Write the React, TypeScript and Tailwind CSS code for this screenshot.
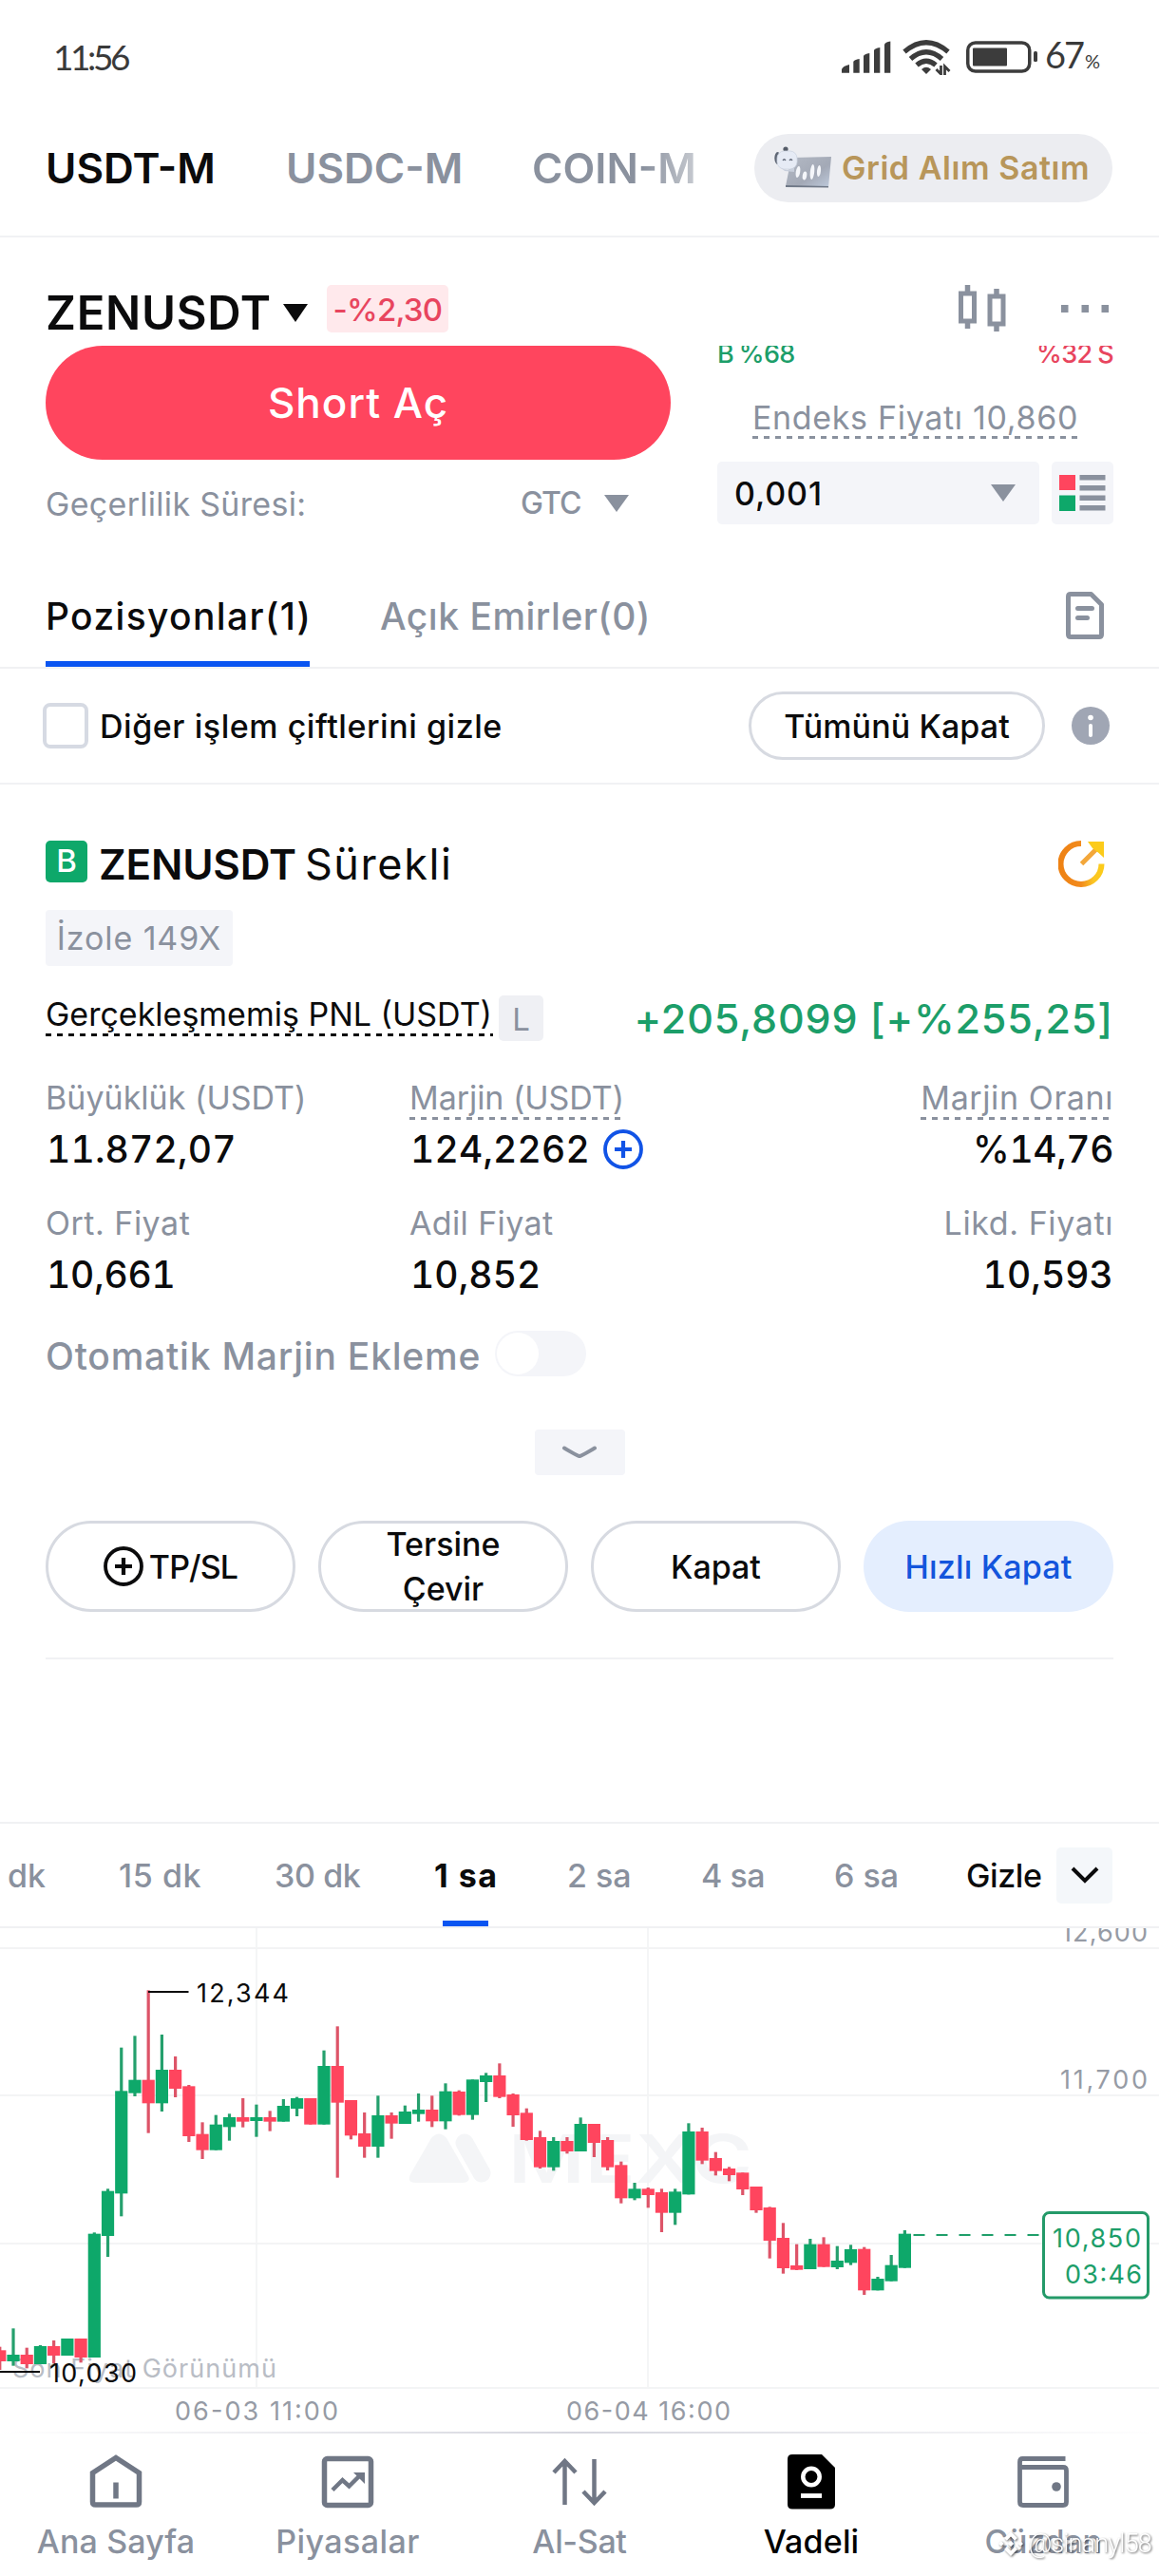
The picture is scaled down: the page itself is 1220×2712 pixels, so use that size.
import type { ReactNode } from "react";
import clsx from "clsx";

const GREEN = "#0ea86a";
const RED = "#ff455e";

// [up, high, bodyTop, bodyBottom, low] in chart units
type Candle = [0 | 1, number, number, number, number];

const CANDLES: Candle[] = [
  [0, 1322, 1333, 1368, 1395],
  [1, 1264, 1347, 1368, 1382],
  [0, 1325, 1347, 1377, 1390],
  [1, 1317, 1320, 1377, 1377],
  [0, 1302, 1320, 1350, 1374],
  [1, 1296, 1296, 1350, 1350],
  [0, 1296, 1296, 1356, 1372],
  [1, 961, 965, 1356, 1356],
  [1, 823, 830, 972, 1038],
  [1, 377, 514, 838, 910],
  [1, 340, 479, 521, 531],
  [0, 196, 479, 553, 647],
  [1, 336, 447, 553, 579],
  [0, 405, 447, 507, 534],
  [0, 495, 499, 657, 675],
  [0, 613, 650, 701, 729],
  [1, 590, 620, 701, 701],
  [1, 586, 597, 628, 671],
  [0, 537, 597, 611, 629],
  [1, 557, 597, 609, 659],
  [0, 577, 597, 611, 641],
  [1, 540, 561, 611, 611],
  [1, 533, 537, 570, 594],
  [0, 537, 537, 620, 620],
  [1, 386, 435, 620, 620],
  [0, 310, 435, 551, 788],
  [0, 543, 543, 655, 667],
  [0, 582, 648, 690, 725],
  [1, 529, 591, 690, 725],
  [0, 582, 591, 617, 665],
  [1, 560, 579, 618, 618],
  [1, 522, 573, 587, 611],
  [0, 529, 573, 610, 628],
  [1, 490, 515, 610, 635],
  [0, 512, 516, 590, 592],
  [1, 478, 478, 590, 605],
  [1, 457, 465, 486, 549],
  [0, 427, 465, 533, 537],
  [0, 522, 525, 591, 627],
  [0, 569, 583, 669, 671],
  [0, 640, 660, 755, 759],
  [1, 660, 672, 755, 766],
  [0, 660, 672, 705, 712],
  [1, 598, 618, 705, 705],
  [0, 618, 618, 678, 723],
  [0, 660, 669, 755, 765],
  [0, 737, 748, 853, 869],
  [1, 804, 823, 853, 859],
  [0, 819, 823, 843, 883],
  [0, 823, 834, 899, 960],
  [1, 823, 832, 899, 937],
  [1, 616, 642, 841, 841],
  [0, 630, 642, 734, 745],
  [0, 707, 726, 767, 781],
  [0, 754, 759, 780, 799],
  [0, 772, 772, 825, 843],
  [0, 816, 816, 891, 899],
  [0, 880, 882, 987, 1043],
  [0, 931, 978, 1074, 1091],
  [0, 998, 1065, 1079, 1080],
  [1, 981, 998, 1077, 1077],
  [0, 976, 998, 1070, 1070],
  [1, 1004, 1050, 1071, 1077],
  [1, 1000, 1014, 1057, 1064],
  [0, 1007, 1013, 1144, 1158],
  [1, 1101, 1107, 1144, 1144],
  [1, 1032, 1064, 1115, 1115],
  [1, 954, 965, 1073, 1073],
];

function StatusBar() {
  return (
    <div className="flex h-[119px] items-center pl-[56px] text-[#3c3c3c]">
      <span className="w-[830px] font-['Lato',sans-serif] text-[37px] leading-[44px] tracking-[-3.4px] text-[#3a3a3a]">
        11:56
      </span>
      <svg width="52" height="34" viewBox="0 0 52 34" fill="currentColor">
        <path d="M0 33.7V30Q1 26.5 8 25V33.7Z" />
        <path d="M12.3 33.7V22Q13 20 18.7 19V33.7Z" />
        <path d="M23 33.7V16Q23.7 14 29.3 13V33.7Z" />
        <path d="M34 33.7V10Q34.7 8 40.3 7V33.7Z" />
        <path d="M45 33.7V4Q45.7 1.5 51.3 .6V33.7Z" />
      </svg>
      <svg
        className="ml-[12px]"
        width="52"
        height="38"
        viewBox="0 0 52 38"
        fill="none"
        stroke="currentColor"
        strokeWidth="5.2"
      >
        <path d="M2 13.5Q25 -6 48 13.5" />
        <path d="M8.5 21Q25 6.5 41.5 21" />
        <path d="M15 27.5Q25 19 35 27.5" />
        <path d="M25 37L20 32Q25 27.5 30 32Z" fill="currentColor" stroke="none" />
        <path d="M40.5 28V37L35.5 32M44.5 38V29L49.5 34" strokeWidth="2.8" />
      </svg>
      <svg
        className="ml-[15px]"
        width="76"
        height="34"
        viewBox="0 0 76 34"
        fill="none"
      >
        <rect
          x="1.75"
          y="2"
          width="65"
          height="30"
          rx="8"
          stroke="currentColor"
          strokeWidth="3.5"
        />
        <rect x="7" y="7.5" width="36" height="19" rx="1" fill="currentColor" />
        <rect x="71" y="11" width="4" height="11" rx="1.5" fill="currentColor" />
      </svg>
      <span className="ml-[7px] mt-[2px] font-['Lato',sans-serif] text-[38px] leading-[44px] tracking-[-2px] text-[#3a3a3a]">
        67
        <span className="ml-[2px] text-[20px] tracking-normal">%</span>
      </span>
    </div>
  );
}

function GridBotIcon() {
  return (
    <svg width="61" height="45" viewBox="0 0 61 45" fill="none">
      <defs>
        <linearGradient id="bot-screen" x1="0" y1="0" x2="1" y2="1">
          <stop offset="0" stopColor="#b4bac5" />
          <stop offset="0.6" stopColor="#a3a9b6" />
          <stop offset="1" stopColor="#bfcbdd" />
        </linearGradient>
      </defs>
      <path d="M18 12L60 11L57 43L12 42Z" fill="url(#bot-screen)" />
      <path d="M12 41L57 42V43.5L12 43Z" fill="#6f7887" />
      <g fill="#f4f6fa">
        <ellipse cx="25" cy="27" rx="2.2" ry="6" transform="rotate(10 25 27)" />
        <ellipse cx="32" cy="31" rx="2.2" ry="4.5" transform="rotate(10 32 31)" />
        <ellipse cx="40" cy="27" rx="2.2" ry="8" transform="rotate(6 40 27)" />
        <ellipse cx="47" cy="26" rx="2" ry="6" transform="rotate(6 47 26)" />
      </g>
      <path d="M12 3V9" stroke="#8d94a3" strokeWidth="1.5" />
      <circle cx="12" cy="3" r="2.6" fill="#555c68" />
      <ellipse cx="3.5" cy="12.5" rx="3.2" ry="6.5" fill="#5f6775" />
      <rect
        x="3"
        y="5"
        width="21"
        height="19"
        rx="7.5"
        fill="#e6ebf5"
        stroke="#cdd4e1"
        strokeWidth="0.8"
      />
      <path d="M6 22Q14 28 21 22V27L11 26Z" fill="#c8cfdc" />
      <path
        d="M9 15Q10.5 12.5 12 15M16 15Q17.5 12.5 19 15"
        stroke="#5f6675"
        strokeWidth="1.3"
      />
    </svg>
  );
}

function MarketTabs() {
  return (
    <div className="flex h-[131px] items-center border-b-2 border-[#f1f2f4] pb-[14px] pl-[48px] text-[44px] font-semibold leading-[54px] text-[#8a919e]">
      <span className="w-[253px] text-[#0b0b0c]">USDT-M</span>
      <span className="w-[259px]">USDC-M</span>
      <span className="w-[234px] [mask-image:linear-gradient(90deg,#000_50%,rgba(0,0,0,0.45)_75%)]">
        COIN-M
      </span>
      <div className="flex h-[72px] w-[377px] items-center rounded-full bg-[#ecedf1] pl-[21px]">
        <GridBotIcon />
        <span className="ml-[10px] whitespace-nowrap text-[34px] leading-[40px] tracking-[0.56px] text-[#b8965a]">
          Grid Alım Satım
        </span>
      </div>
    </div>
  );
}

function PairHeader() {
  return (
    <div className="flex h-[114px] items-center pl-[48px] pt-[36px]">
      <h1 className="mt-[9px] text-[49px] font-semibold leading-[60px] tracking-[0.7px] text-[#0b0b0c]">
        ZENUSDT
      </h1>
      <svg className="ml-[11px] mt-[8px]" width="28" height="19" viewBox="0 0 28 19">
        <path d="M1 0H27L14 19Z" fill="#0b0b0c" />
      </svg>
      <span className="ml-[19px] flex h-[50px] w-[128px] items-center justify-center rounded-[5px] bg-[#ffe9ec] pt-[3px] text-[33px] font-medium tracking-[-0.8px] text-[#e8455e]">
        -%2,30
      </span>
      <svg
        className="ml-[537px]"
        width="50"
        height="50"
        viewBox="0 0 50 50"
        fill="none"
        stroke="#8a919e"
        strokeWidth="5"
      >
        <path d="M9.5 0V8M9.5 39V46M40 4V11M40 42V49" strokeWidth="5.5" />
        <rect x="2.5" y="9" width="14" height="29" />
        <rect x="33" y="12" width="14" height="29" />
      </svg>
      <svg className="ml-[58px]" width="52" height="8" viewBox="0 0 52 8" fill="#8a919e">
        <rect width="7.5" height="8" />
        <rect x="21.5" width="7.5" height="8" />
        <rect x="42.5" width="7.5" height="8" />
      </svg>
    </div>
  );
}

function Dashed({
  children,
  className,
  dark,
}: {
  children: ReactNode;
  className?: string;
  dark?: boolean;
}) {
  return (
    <span
      className={clsx(
        "inline-block whitespace-nowrap bg-[length:100%_3px] bg-bottom bg-no-repeat",
        dark
          ? "bg-[repeating-linear-gradient(90deg,#0b0b0c_0_6px,transparent_6px_12px)]"
          : "bg-[repeating-linear-gradient(90deg,#8a919e_0_6px,transparent_6px_12px)]",
        className,
      )}
    >
      {children}
    </span>
  );
}

function TradePanel() {
  return (
    <div className="flex h-[236px] shrink-0 gap-[49px] overflow-hidden px-[48px]">
      <div className="w-[658px]">
        <button className="flex h-[120px] w-full items-center justify-center rounded-full bg-[#ff455e] text-[44px] font-medium tracking-[1px] text-white">
          Short Aç
        </button>
        <div className="flex h-[92px] items-center text-[34px] text-[#8a919e]">
          <span className="w-[500px] tracking-[0.3px]">Geçerlilik Süresi:</span>
          <span className="w-[88px] text-[32px] font-medium tracking-[-1px]">GTC</span>
          <svg width="26" height="18" viewBox="0 0 26 18">
            <path d="M0 0H26L13 18Z" fill="#8a919e" />
          </svg>
        </div>
      </div>
      <div className="w-[417px]">
        <div className="flex h-[18px] justify-between text-[27px] font-medium leading-[17px] tracking-[-0.6px] [word-spacing:-1px]">
          <span className="text-[#1c9e69]">B %68</span>
          <span className="text-[#e8455e]">%32 S</span>
        </div>
        <div className="mt-[36px] flex justify-center">
          <Dashed className="h-[44px] text-[34px] leading-[44px] tracking-[0.68px] text-[#8a919e]">
            Endeks Fiyatı 10,860
          </Dashed>
        </div>
        <div className="mt-[24px] flex justify-between">
          <div className="flex h-[66px] w-[339px] items-center justify-between rounded-[5px] bg-[#f4f5f9] pl-[18px] pr-[25px] text-[34px] font-medium tracking-[0.9px] text-[#0b0b0c]">
            0,001
            <svg width="26" height="18" viewBox="0 0 26 18">
              <path d="M0 0H26L13 18Z" fill="#8a919e" />
            </svg>
          </div>
          <div className="flex h-[66px] w-[65px] items-center justify-center rounded-[5px] bg-[#f4f5f9]">
            <svg width="49" height="38" viewBox="0 0 49 38" fill="#8a919e">
              <rect width="17" height="16" fill={RED} />
              <rect y="21.5" width="17" height="16.5" fill={GREEN} />
              <rect x="21.5" width="27" height="5.5" />
              <rect x="21.5" y="11" width="27" height="5.5" />
              <rect x="21.5" y="21.5" width="27" height="5.5" />
              <rect x="21.5" y="32" width="27" height="5.5" />
            </svg>
          </div>
        </div>
      </div>
    </div>
  );
}

function OrderTabs() {
  return (
    <div className="flex h-[104px] items-center justify-between border-b-2 border-[#f0f1f3] px-[48px]">
      <div className="flex h-full text-[39px] font-medium">
        <div className="flex h-full w-[278px] items-center whitespace-nowrap border-b-[6px] border-[#0a55f1] pt-[2px] tracking-[1.35px] text-[#0b0b0c]">
          Pozisyonlar(1)
        </div>
        <div className="ml-[74px] flex h-full items-center pb-[4px] tracking-[0.5px] text-[#8a919e]">
          Açık Emirler(0)
        </div>
      </div>
      <svg
        className="mb-[6px] mr-[10px]"
        width="40"
        height="50"
        viewBox="0 0 40 50"
        fill="none"
        stroke="#8a919e"
        strokeWidth="5"
      >
        <path
          d="M2.5 5Q2.5 2.5 5 2.5H26.5L37.5 13.5V45Q37.5 47.5 35 47.5H5Q2.5 47.5 2.5 45Z"
          strokeLinejoin="round"
        />
        <path d="M12.5 17.5H27.5M12.5 27.5H22.5" strokeLinecap="round" />
      </svg>
    </div>
  );
}

function FilterRow() {
  return (
    <div className="flex h-[122px] items-center border-b-2 border-[#f1f2f4] pl-[45px] text-[34px] font-medium text-[#0b0b0c]">
      <span className="h-[48px] w-[48px] rounded-[8px] border-4 border-[#d6dae3]" />
      <span className="ml-[12px] w-[683px] tracking-[0.55px]">
        Diğer işlem çiftlerini gizle
      </span>
      <button className="flex h-[72px] w-[312px] items-center justify-center rounded-full border-3 border-[#d7dae1] tracking-[0.1px]">
        Tümünü Kapat
      </button>
      <svg className="ml-[28px]" width="40" height="40" viewBox="0 0 40 40">
        <circle cx="20" cy="20" r="20" fill="#a0a6b4" />
        <circle cx="20" cy="11.5" r="2.8" fill="#fff" />
        <rect x="18" y="18" width="4" height="14" rx="2" fill="#fff" />
      </svg>
    </div>
  );
}

function CirclePlus({ className }: { className?: string }) {
  return (
    <svg
      className={className}
      width="42"
      height="42"
      viewBox="0 0 42 42"
      fill="none"
      stroke="currentColor"
    >
      <circle cx="21" cy="21" r="19" strokeWidth="3.8" />
      <path d="M21 12V30M12 21H30" strokeWidth="4.2" />
    </svg>
  );
}

function ShareIcon() {
  return (
    <svg width="49" height="49" viewBox="0 0 49 49" fill="none">
      <defs>
        <linearGradient id="share-ring" x1="0" y1="0" x2="1" y2="0">
          <stop offset="0" stopColor="#ee8214" />
          <stop offset="0.5" stopColor="#f28a1c" />
          <stop offset="0.8" stopColor="#fbc524" />
          <stop offset="1" stopColor="#fccb1a" />
        </linearGradient>
      </defs>
      <path
        d="M24 3A21.5 21.5 0 1 0 45.5 24.5"
        stroke="url(#share-ring)"
        strokeWidth="6"
      />
      <path d="M24.5 24.5L40 9" stroke="#f3a73a" strokeWidth="5" />
      <path d="M31 1H48V18L42.5 13L36 8Z" fill="#fccb1a" />
    </svg>
  );
}

function Stat({
  label,
  value,
  tracking,
  valueTracking,
  dashed,
  plus,
  right,
}: {
  label: string;
  value: string;
  tracking: string;
  valueTracking: string;
  dashed?: boolean;
  plus?: boolean;
  right?: boolean;
}) {
  const labelClass = clsx(
    "h-[46px] text-[34px] leading-[46px] text-[#8a919e]",
    tracking,
  );
  return (
    <div className={clsx("flex flex-col gap-[9px]", right ? "items-end" : "items-start")}>
      {dashed ? (
        <Dashed className={labelClass}>{label}</Dashed>
      ) : (
        <span className={labelClass}>{label}</span>
      )}
      <span className="flex h-[44px] items-center pl-[1px] text-[39px] font-medium tabular-nums leading-[44px] text-[#0b0b0c]">
        <span className={valueTracking}>{value}</span>
        {plus && <CirclePlus className="ml-[14px] text-[#1153e6]" />}
      </span>
    </div>
  );
}

function PositionCard() {
  return (
    <div className="flex flex-col px-[48px] pt-[59px]">
      <div className="flex h-[49px] items-start">
        <span className="flex h-[44px] w-[44px] items-center justify-center rounded-[5px] bg-[#0ea86a] text-[33px] font-medium text-white">
          B
        </span>
        <span className="ml-[12px] text-[44px] font-semibold leading-[50px] tracking-[-0.19px] text-[#0b0b0c]">
          ZENUSDT
        </span>
        <span className="ml-[9px] grow text-[45px] leading-[50px] tracking-[1.6px] text-[#0b0b0c]">
          Sürekli
        </span>
        <span className="mr-[9px]">
          <ShareIcon />
        </span>
      </div>

      <span className="mt-[24px] flex h-[59px] w-[197px] items-center justify-center self-start rounded-[4px] bg-[#f4f5f9] text-[34px] tracking-[0.9px] text-[#8a919e]">
        İzole 149X
      </span>

      <div className="mt-[31px] flex h-[48px] items-start">
        <Dashed
          dark
          className="h-[43px] w-[471px] text-[34px] leading-[40px] text-[#0b0b0c]"
        >
          Gerçekleşmemiş PNL (USDT)
        </Dashed>
        <span className="ml-[6px] flex h-[48px] w-[47px] items-center justify-center rounded-[5px] bg-[#eff0f4] pt-[3px] text-[33px] text-[#8a919e]">
          L
        </span>
        <span className="grow whitespace-nowrap text-right text-[43px] font-medium leading-[48px] tracking-[0.85px] text-[#1c9e69]">
          +205,8099 [+%255,25]
        </span>
      </div>

      <div className="mt-[37px] grid grid-cols-[383px_380px_1fr] gap-y-[33px]">
        <Stat
          label="Büyüklük (USDT)"
          value="11.872,07"
          tracking="tracking-[0.02px]"
          valueTracking="tracking-[0.2px]"
        />
        <Stat
          label="Marjin (USDT)"
          value="124,2262"
          tracking="tracking-[-0.05px]"
          valueTracking="tracking-[0.2px]"
          dashed
          plus
        />
        <Stat
          label="Marjin Oranı"
          value="%14,76"
          tracking="tracking-[0.6px]"
          valueTracking="tracking-[-0.4px]"
          dashed
          right
        />
        <Stat
          label="Ort. Fiyat"
          value="10,661"
          tracking="tracking-[0.5px]"
          valueTracking="tracking-[-0.2px]"
        />
        <Stat
          label="Adil Fiyat"
          value="10,852"
          tracking="tracking-[0.37px]"
          valueTracking="tracking-[0.1px]"
        />
        <Stat
          label="Likd. Fiyatı"
          value="10,593"
          tracking="tracking-[0.6px]"
          valueTracking="tracking-[0.1px]"
          right
        />
      </div>

      <div className="mt-[37px] flex h-[48px] items-start">
        <span className="text-[39px] font-medium leading-[54px] tracking-[0.78px] text-[#8a919e]">
          Otomatik Marjin Ekleme
        </span>
        <span className="ml-[15px] flex h-[48px] w-[96px] items-center rounded-full bg-[#f4f5f9] pl-[2px]">
          <span className="h-[44px] w-[44px] rounded-full bg-white" />
        </span>
      </div>

      <button className="mt-[56px] flex h-[48px] w-[95px] items-center justify-center self-center rounded-[4px] bg-[#f4f5f9]">
        <svg width="38" height="14" viewBox="0 0 38 14" fill="none">
          <path
            d="M3 2.5Q17 11 19 11T35 2.5"
            stroke="#8a919e"
            strokeWidth="4"
            strokeLinecap="round"
          />
        </svg>
      </button>

      <div className="mt-[48px] grid h-[96px] grid-cols-4 gap-[24px] text-[34px] font-medium leading-[47px] text-[#0b0b0c]">
        <button className="flex items-center justify-center rounded-full border-3 border-[#d7dae1]">
          <CirclePlus className="mr-[6px]" />
          <span className="tracking-[-0.9px]">TP/SL</span>
        </button>
        <button className="flex h-[96px] items-center justify-center rounded-full border-3 border-[#d7dae1] px-[48px]">
          Tersine Çevir
        </button>
        <button className="flex items-center justify-center rounded-full border-3 border-[#d7dae1]">
          Kapat
        </button>
        <button className="flex items-center justify-center rounded-full bg-[#e4eefe] tracking-[0.2px] text-[#1355dc]">
          Hızlı Kapat
        </button>
      </div>

      <div className="mb-[171px] mt-[48px] h-[2px] bg-[#f1f2f4]" />
    </div>
  );
}

function IntervalBar() {
  return (
    <div className="grid h-[112px] grid-cols-[8px_117px_164px_168px_140px_141px_140px_139px_95px_59px] items-center border-y-2 border-[#f0f1f3] text-[34px] font-medium text-[#8a919e]">
      <span />
      <span>dk</span>
      <span className="tracking-[0.6px]">15 dk</span>
      <span className="tracking-[-0.4px]">30 dk</span>
      <div className="relative flex h-full items-center font-bold tracking-[1.5px] text-[#0b0b0c]">
        1 sa
        <span className="absolute bottom-0 left-[9px] h-[6px] w-[48px] bg-[#0a55f1]" />
      </div>
      <span>2 sa</span>
      <span className="tracking-[-0.5px]">4 sa</span>
      <span>6 sa</span>
      <span className="tracking-[-0.4px] text-[#0b0b0c]">Gizle</span>
      <span className="flex h-[59px] items-center justify-center rounded-[5px] bg-[#f4f7fa]">
        <svg width="30" height="18" viewBox="0 0 30 18" fill="none">
          <path d="M2 2L15 15L28 2" stroke="#0b0b0c" strokeWidth="4" />
        </svg>
      </span>
    </div>
  );
}

function PriceChart() {
  return (
    <svg
      className="block font-['Inter',sans-serif]"
      width="1220"
      height="530"
      viewBox="0 0 1220 530"
      fontSize="27"
    >
      <g fill="#f4f5f7">
        <path d="M454 221Q462 212 470 221L493 261Q496 268 486 268H438Q428 268 432 259Z" />
        <path
          d="M489 226L507 258"
          stroke="#f4f5f7"
          strokeWidth="19"
          strokeLinecap="round"
        />
        <text
          x="535"
          y="268"
          fontSize="70"
          fontWeight="600"
          textLength="257"
          lengthAdjust="spacingAndGlyphs"
        >
          MEXC
        </text>
      </g>

      <g stroke="#f3f4f5" strokeWidth="1.8">
        <path d="M0 21H1220M0 176H1220M0 332H1220M0 484H1220" />
        <path d="M270 0V485M682 0V485" />
      </g>

      <text x="13" y="472.5" fill="#b9bdc5" textLength="278">
        Son Fiyat Görünümü
      </text>

      {CANDLES.map(([up, high, top, bottom, low], i) => {
        const cx = 14 + (i - 1) * 14.218;
        return (
          <g key={i}>
            <rect
              x={cx - 1.6}
              y={high / 3}
              width="3.2"
              height={(low - high) / 3}
              fill={up ? "#25a06d" : "#dd5468"}
            />
            <rect
              x={cx - 6.6}
              y={top / 3}
              width="13.2"
              height={(bottom - top) / 3}
              fill={up ? GREEN : RED}
            />
          </g>
        );
      })}

      <path d="M156 67H198.5M0 467H42" stroke="#0b0b0c" strokeWidth="2" />
      <text x="207" y="78.3" fill="#0b0b0c" textLength="97">
        12,344
      </text>
      <text x="52" y="478" fill="#0b0b0c" textLength="92">
        10,030
      </text>

      <path
        d="M961.5 323H1096"
        stroke="#1f9f6a"
        strokeWidth="2"
        strokeDasharray="12 12"
      />
      <g fill="#969ba5">
        <text x="1117" y="13.5" textLength="91">
          12,600
        </text>
        <text x="1116" y="169.3" textLength="92">
          11,700
        </text>
        <text x="184" y="518" textLength="172">
          06-03 11:00
        </text>
        <text x="596" y="518" textLength="173">
          06-04 16:00
        </text>
      </g>
      <rect
        x="1098.5"
        y="299.5"
        width="110"
        height="89.5"
        rx="6"
        fill="#fff"
        stroke="#249a69"
        strokeWidth="3"
      />
      <g fill="#1c9e69">
        <text x="1108" y="336" textLength="93">
          10,850
        </text>
        <text x="1121" y="374" textLength="81">
          03:46
        </text>
      </g>
    </svg>
  );
}

const NAV: { label: string; tracking: string; active?: boolean; icon: ReactNode }[] = [
  {
    label: "Ana Sayfa",
    tracking: "tracking-[0.12px]",
    icon: (
      <>
        <path d="M5.5 20.5L30 4.5L54.5 20.5V51Q54.5 54 51.5 54H8.5Q5.5 54 5.5 51Z" />
        <path d="M30 30.5V47.5" />
      </>
    ),
  },
  {
    label: "Piyasalar",
    tracking: "tracking-[0.43px]",
    icon: (
      <>
        <rect x="5.5" y="5.5" width="49" height="49" rx="3" />
        <path d="M14 38.5L24.5 28L31.5 34.5L43 23" strokeWidth="4.5" />
        <path d="M36 20H48V32Z" fill="currentColor" stroke="none" />
      </>
    ),
  },
  {
    label: "Al-Sat",
    tracking: "tracking-[-0.33px]",
    icon: (
      <path
        d="M14.5 54V8M3 20L14.5 8L26 20M45.5 6V52M34 40L45.5 52L57 40"
        strokeWidth="4.5"
      />
    ),
  },
  {
    label: "Vadeli",
    tracking: "tracking-[0.17px]",
    active: true,
    icon: (
      <>
        <path
          d="M5 6Q5 1 10 1H41L55 15V53.5Q55 58.5 50 58.5H10Q5 58.5 5 53.5Z"
          fill="#000"
          stroke="none"
        />
        <circle cx="30" cy="24.5" r="8.7" stroke="#fff" strokeWidth="4.5" />
        <path d="M19 44.5H41" stroke="#fff" strokeWidth="4.8" />
      </>
    ),
  },
  {
    label: "Cüzdan",
    tracking: "tracking-[-0.23px]",
    icon: (
      <>
        <path
          d="M53.5 5.5H8.5Q5.5 5.5 5.5 9V51Q5.5 54.5 9 54.5H51Q54.5 54.5 54.5 51V18Q54.5 14.5 51 14.5H5.5"
          strokeWidth="4.8"
        />
        <circle cx="44" cy="35" r="4.8" fill="currentColor" stroke="none" />
      </>
    ),
  },
];

function BottomNav() {
  return (
    <nav className="relative">
      <div className="h-[2px] bg-linear-to-r from-white via-[#d5d6de] to-white" />
      <div className="grid grid-cols-5 pt-[21px] text-[34px] font-medium leading-[40px] text-[#8a919e]">
        {NAV.map((item) => (
          <div key={item.label} className="flex flex-col items-center">
            <svg
              className={item.active ? "text-black" : "text-[#707785]"}
              width="60"
              height="60"
              viewBox="0 0 60 60"
              fill="none"
              stroke="currentColor"
              strokeWidth="5.5"
            >
              {item.icon}
            </svg>
            <span
              className={clsx("mt-[13px]", item.tracking, item.active && "text-black")}
            >
              {item.label}
            </span>
          </div>
        ))}
      </div>

      {/* author mark over the last tab */}
      <div className="absolute bottom-[2px] right-[8px] flex items-center font-['Roboto',sans-serif] text-[27px] font-light leading-[32px] tracking-[-0.8px] text-white [filter:drop-shadow(1px_1px_1px_rgba(0,0,0,0.6))]">
        <svg className="mr-[6px]" width="26" height="28" viewBox="0 0 28 28" fill="#fff">
          <path d="M14 0L21.5 7.5L18.5 10.5L14 6L9.5 10.5L6.5 7.5Z" />
          <path d="M14 28L21.5 20.5L18.5 17.5L14 22L9.5 17.5L6.5 20.5Z" />
          <path d="M14 10.5L17.5 14L14 17.5L10.5 14Z" />
          <path d="M3 11L6 14L3 17L0 14ZM25 11L28 14L25 17L22 14Z" />
        </svg>
        @sinanyl58
      </div>
    </nav>
  );
}

export default function App() {
  return (
    <div className="flex h-[2712px] w-[1220px] flex-col overflow-hidden bg-white font-['Inter',sans-serif] antialiased *:shrink-0">
      <StatusBar />
      <MarketTabs />
      <PairHeader />
      <TradePanel />
      <OrderTabs />
      <FilterRow />
      <PositionCard />
      <IntervalBar />
      <PriceChart />
      <BottomNav />
    </div>
  );
}
